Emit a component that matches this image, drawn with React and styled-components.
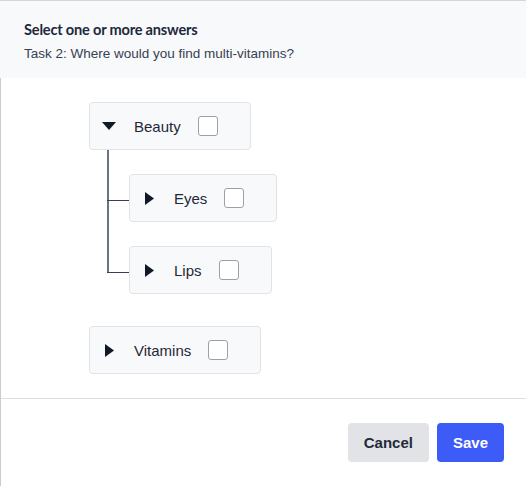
import React from "react";
import styled, { createGlobalStyle } from "styled-components";

const Global = createGlobalStyle`
  html, body { margin: 0; padding: 0; background: #ffffff; }
  body { font-family: "Liberation Sans", Arial, sans-serif; }
  * { box-sizing: border-box; }
`;

const Page = styled.div`
  width: 526px;
  height: 486px;
  display: flex;
  flex-direction: column;
  background: #ffffff;
  overflow: hidden;
`;

const Header = styled.header`
  height: 78px;
  border-top: 1px solid #d3d6db;
  background: #f8f9fb;
  padding: 19px 24px 0 24px;
  display: flex;
  flex-direction: column;
`;

const Title = styled.h1`
  margin: 0;
  font-family: Lato, "Liberation Sans", Arial, sans-serif;
  font-size: 14.6px;
  letter-spacing: -0.2px;
  line-height: 20px;
  font-weight: 700;
  color: #1e293b;
`;

const Subtitle = styled.p`
  margin: 5px 0 0 0;
  font-size: 13.5px;
  line-height: 18px;
  color: #374151;
`;

const Content = styled.div`
  flex: 1;
  border-left: 1px solid #c9cdd2;
  display: flex;
  flex-direction: column;
`;

const Body = styled.main`
  padding: 24px 0 24px 88px;
  border-bottom: 1px solid #dcdfe3;
  display: flex;
  flex-direction: column;
  gap: 32px;
`;

const NodeGroup = styled.div`
  display: flex;
  flex-direction: column;
  align-items: flex-start;
`;

const Card = styled.div`
  height: 48px;
  display: flex;
  align-items: center;
  padding: 0 32px 0 12px;
  border: 1px solid #dfe2e6;
  border-radius: 4px;
  background: #f8f9fb;
`;

const Caret = styled.span`
  width: 14px;
  display: flex;
  justify-content: center;
  align-items: center;
  margin-right: 18px;
`;

const Label = styled.span`
  font-size: 15px;
  color: #1f2937;
  margin-right: 17px;
`;

const Box = styled.span`
  width: 20px;
  height: 20px;
  border: 1.5px solid #9aa1ab;
  border-radius: 3px;
  background: #ffffff;
`;

const Children = styled.div`
  margin-left: 18px;
  padding-left: 22px;
  display: flex;
  flex-direction: column;
  align-items: flex-start;
`;

const ChildRow = styled.div`
  position: relative;
  padding-top: 24px;
  display: flex;
  &::before {
    content: "";
    position: absolute;
    left: -22px;
    top: 0;
    width: 2px;
    height: 100%;
    background: #6b7280;
  }
  &:last-child::before {
    height: 51px;
  }
  &::after {
    content: "";
    position: absolute;
    left: -22px;
    top: 50px;
    width: 22px;
    height: 1px;
    background: #374151;
  }
`;

const Footer = styled.footer`
  padding: 24px 22px 0 0;
  display: flex;
  justify-content: flex-end;
  gap: 8px;
`;

const Button = styled.button`
  height: 39px;
  padding: 0 16px;
  border: none;
  border-radius: 4px;
  font-family: "Liberation Sans", Arial, sans-serif;
  font-size: 15px;
  font-weight: 700;
  background: ${(p) => (p.$primary ? "#3d5bf6" : "#e1e3e7")};
  color: ${(p) => (p.$primary ? "#ffffff" : "#1f2a3c")};
`;

const Down = () => (
  <svg width="14" height="8" viewBox="0 0 14 8">
    <polygon points="0,0 14,0 7,8" fill="#111827" />
  </svg>
);

const Right = () => (
  <svg width="9" height="13" viewBox="0 0 9 13">
    <polygon points="0,0 9,6.5 0,13" fill="#111827" />
  </svg>
);

const Node = ({ label, open }) => (
  <Card>
    <Caret>{open ? <Down /> : <Right />}</Caret>
    <Label>{label}</Label>
    <Box />
  </Card>
);

export default function App() {
  return (
    <>
      <Global />
      <Page>
        <Header>
          <Title>Select one or more answers</Title>
          <Subtitle>Task 2: Where would you find multi-vitamins?</Subtitle>
        </Header>
        <Content>
          <Body>
            <NodeGroup>
              <Node label="Beauty" open />
              <Children>
                <ChildRow>
                  <Node label="Eyes" />
                </ChildRow>
                <ChildRow>
                  <Node label="Lips" />
                </ChildRow>
              </Children>
            </NodeGroup>
            <NodeGroup>
              <Node label="Vitamins" />
            </NodeGroup>
          </Body>
          <Footer>
            <Button>Cancel</Button>
            <Button $primary>Save</Button>
          </Footer>
        </Content>
      </Page>
    </>
  );
}
